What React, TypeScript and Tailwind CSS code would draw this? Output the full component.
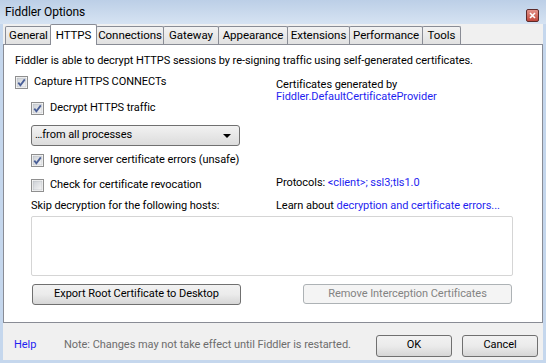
import React from 'react';

const font = { fontFamily: 'Roboto, "Noto Sans", sans-serif' };

const tabs = ['General', 'HTTPS', 'Connections', 'Gateway', 'Appearance', 'Extensions', 'Performance', 'Tools'];
const tabWidths = ['w-[47px]', 'w-[47px]', 'w-[68px]', 'w-[56px]', 'w-[70px]', 'w-[63px]', 'w-[74px]', 'w-[39px]'];

const CheckBox = ({ checked }: { checked: boolean }) => (
  <svg width="13" height="13" viewBox="0 0 13 13" className="shrink-0">
    <defs>
      <linearGradient id="cbg" x1="0" y1="0" x2="1" y2="1">
        <stop offset="0" stopColor="#cbcfd5" />
        <stop offset="1" stopColor="#f6f6f6" />
      </linearGradient>
    </defs>
    <rect x="0.5" y="0.5" width="12" height="12" fill="#fff" stroke="#8f8f8f" />
    <rect x="2" y="2" width="9" height="9" fill="url(#cbg)" stroke="#aeb3b9" strokeWidth="0.5" />
    {checked && <path d="M3.3 6.6 L5.4 9.2 L9.8 3.4" fill="none" stroke="#4a5f97" strokeWidth="1.8" />}
  </svg>
);

const Check = ({ checked, label }: { checked: boolean; label: string }) => (
  <div className="flex items-center gap-[6px] whitespace-nowrap">
    <CheckBox checked={checked} />
    <span>{label}</span>
  </div>
);

const Button = ({ children, className, disabled }: { children: React.ReactNode; className: string; disabled?: boolean }) => (
  <div
    className={`flex items-center justify-center rounded-[3px] border whitespace-nowrap ${
      disabled ? 'border-[#adb2b5] bg-[#f4f4f4] text-[#838383]' : 'border-[#707070] bg-gradient-to-b from-[#f2f2f2] via-[#ebebeb] to-[#d6d6d6] text-black'
    } ${className}`}
  >
    {children}
  </div>
);

export default function App() {
  return (
    <div className="w-[546px] h-[363px] bg-[#c5d7ed] flex flex-col text-[11px] tracking-[-0.05px] text-black overflow-hidden" style={font}>
      {/* title bar */}
      <div className="h-[24px] shrink-0 flex items-center justify-between pl-[5px] pr-[7px] bg-gradient-to-b from-[#bccfe7] to-[#d6e3f2]">
        <span className="text-[12px] leading-none text-black">Fiddler Options</span>
        <div className="w-[13px] h-[13px] mt-[6px] rounded-[2px] border border-[#5c2a2a] bg-gradient-to-b from-[#e3928a] to-[#c1473c] flex items-center justify-center">
          <svg width="7" height="7" viewBox="0 0 7 7">
            <path d="M1 1 L6 6 M6 1 L1 6" stroke="#fff" strokeWidth="1.6" />
          </svg>
        </div>
      </div>

      <div className="flex-1 flex flex-col mx-[3px] mb-[3px] bg-[#f0f0f0]">
        {/* tabs */}
        <div className="flex items-end h-[20px] pl-[2px] relative z-10 whitespace-nowrap text-[11.5px]">
          {tabs.map((t, i) =>
            t === 'HTTPS' ? (
              <div key={t} className={`${tabWidths[i]} h-[21px] -mb-px -mx-[1px] bg-white border border-[#898c95] border-b-0 flex items-start justify-center pt-[2px] rounded-t-[2px]`}>
                {t}
              </div>
            ) : (
              <div key={t} className={`${tabWidths[i]} h-[18px] border border-[#898c95] border-b-0 bg-gradient-to-b from-[#f2f2f2] to-[#e1e1e1] flex items-center justify-center rounded-t-[2px] -mr-px`}>
                {t}
              </div>
            )
          )}
        </div>

        {/* panel */}
        <div className="h-[279px] shrink-0 bg-white border border-[#898c95] flex flex-col pt-[8px] pl-[11px] pr-[30px] whitespace-nowrap">
          <div className="leading-[16px]">
            Fiddler is able to decrypt HTTPS sessions by re-signing traffic using self-generated certificates.
          </div>
          <div className="flex mt-[5px]">
            <div className="w-[261px] shrink-0 flex flex-col">
              <div className="h-[16px] flex items-center">
                <Check checked label="Capture HTTPS CONNECTs" />
              </div>
              <div className="pl-[16px] flex flex-col">
                <div className="h-[16px] mt-[10px] flex items-center">
                  <Check checked label="Decrypt HTTPS traffic" />
                </div>
                <div className="mt-[9px] w-[209px] h-[21px] rounded-[3px] border border-[#707070] bg-gradient-to-b from-[#f2f2f2] to-[#dcdcdc] flex items-center justify-between pl-[3px] pr-[8px]">
                  <span>…from all processes</span>
                  <svg width="8" height="4" viewBox="0 0 8 4">
                    <path d="M0 0 H8 L4 4 Z" fill="#000" />
                  </svg>
                </div>
                <div className="h-[16px] mt-[6px] flex items-center">
                  <Check checked label="Ignore server certificate errors (unsafe)" />
                </div>
                <div className="h-[16px] mt-[9px] flex items-center">
                  <Check checked={false} label="Check for certificate revocation" />
                </div>
              </div>
            </div>
            <div className="flex flex-col pt-[5px]">
              <div className="leading-[12px]">Certificates generated by</div>
              <div className="leading-[12px] text-[#1f1ff0]">Fiddler.DefaultCertificateProvider</div>
              <div className="mt-[73px] leading-[14px]">
                Protocols: <span className="text-[#1f1ff0]">&lt;client&gt;; ssl3;tls1.0</span>
              </div>
            </div>
          </div>

          <div className="flex mt-[5px] pl-[16px] leading-[16px]">
            <div className="w-[245px] shrink-0">Skip decryption for the following hosts:</div>
            <div>
              Learn about <span className="text-[#1f1ff0]">decryption and certificate errors...</span>
            </div>
          </div>
          <div className="ml-[16px] mt-[2px] w-[482px] h-[60px] shrink-0 border border-[#d5d5d5] rounded-[2px] bg-white" />
          <div className="flex justify-between ml-[17px] mt-[8px] w-[480px]">
            <Button className="w-[209px] h-[21px]">Export Root Certificate to Desktop</Button>
            <Button disabled className="w-[209px] h-[20px]">Remove Interception Certificates</Button>
          </div>
        </div>

        {/* footer */}
        <div className="flex-1 flex items-center pt-[8px] pl-[11px] pr-[5px] whitespace-nowrap">
          <span className="text-[#1f1ff0] w-[50px]">Help</span>
          <span className="text-[#6d6d6d] flex-1">Note: Changes may not take effect until Fiddler is restarted.</span>
          <Button className="w-[76px] h-[22px] mr-[10px]">OK</Button>
          <Button className="w-[76px] h-[22px]">Cancel</Button>
        </div>
      </div>
    </div>
  );
}
